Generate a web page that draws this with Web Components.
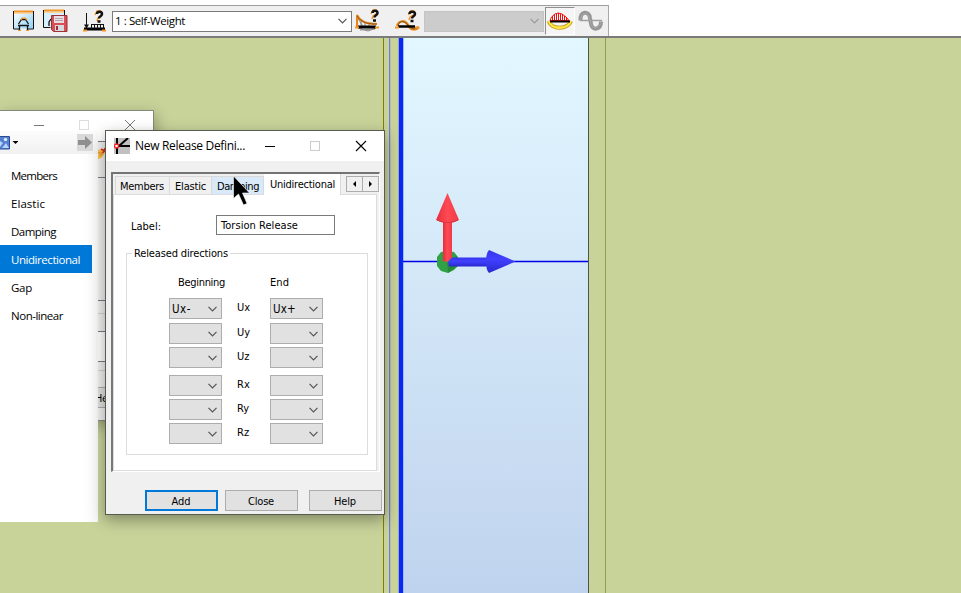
<!DOCTYPE html>
<html lang="en">
<head>
<meta charset="utf-8">
<title>Release definition</title>
<style>
  html, body {
    margin: 0;
    padding: 0;
    width: 961px;
    height: 593px;
    overflow: hidden;
  }
</style>
</head>
<body>
<cad-app></cad-app>
<script>
// Text run that spreads its letters to an exact width
class FitText extends HTMLElement {
  connectedCallback() {
    this.attachShadow({ mode: 'open' });
    this.shadowRoot.innerHTML = '<style>:host { display: inline-block; white-space: nowrap; }</style><slot></slot>';
    const target = Number(this.getAttribute('w'));
    const count = this.textContent.length;
    if (target && count > 1) {
      const natural = this.getBoundingClientRect().width;
      this.style.letterSpacing = (target - natural) / count + 'px';
    }
  }
}
customElements.define('fit-text', FitText);

const ICONS = {
  frame: `<svg width="22" height="22" viewBox="0 0 22 22">
    <defs><linearGradient id="g" x2="1" y2="1"><stop stop-color="#fff"/><stop offset="1" stop-color="#8fd0f5"/></linearGradient></defs>
    <rect x=".5" y="1.500" width="20" height="17" fill="url(#g)"/>
    <path d="M1 1.500h19" stroke="#f79422" stroke-width="2"/><path d="M1 3.500h19" stroke="#ffd59c"/>
    <path d="M.5 1v18h6.500M20.500 1v18h-6.500" stroke="#111" fill="none"/>
    <path d="M6.500 20v-5M14.500 20v-5M5 15.500h11" fill="none" stroke="#151515" stroke-width="1.300"/>
    <path d="M5.500 14l3-4.500h4l3 4.500" stroke="#151515" fill="none" stroke-width="1.300"/>
    <path d="M7.500 10l2-2h2.500l2 2M5 20.500h3M13 20.500h3" stroke="#f79422" fill="none" stroke-width="1.200"/></svg>`,
  save: `<svg width="26" height="24" viewBox="0 0 26 24">
    <rect x=".5" y="1" width="21" height="17" fill="#d8f0fc"/>
    <path d="M1 1.500h20" stroke="#f79422" stroke-width="2"/><path d="M1 3.500h20" stroke="#ffd59c"/>
    <path d="M.5 1v17.500h7M21.500 1v5" stroke="#111" fill="none"/>
    <path d="M6 17v-4l2-3" stroke="#111" stroke-width="1.300" fill="none"/>
    <path d="M8.500 6.500h15.500v16H10.500l-2-2z" fill="#d94d55" stroke="#9b3036"/>
    <path d="M11 7h10v7H11z" fill="#e8dfe4"/><path d="M12 9.500h8M12 11.500h8" stroke="#b7a6ae"/>
    <path d="M12 16h9v6h-9z" fill="#d4dce0"/><path d="M14 17v4" stroke="#a02d38" stroke-width="2"/></svg>`,
  load: `<svg width="24" height="23" viewBox="0 0 24 23">
    <path d="M3.500 3v14" stroke="#111"/><path d="M1 14.500h5l-2.500 4z" fill="#111"/>
    <path d="M1 19h21" stroke="#000" stroke-width="3"/>
    <path d="M8 14.500h13M8.500 14v5M11.500 14v5M14.500 14v5M17.500 14v5M20.500 14v5" stroke="#111" fill="none"/>
    <path d="M0 20.500h4M19 20.500h4" stroke="#f79422" stroke-width="2"/>
    <path d="M12 5l2-4h4M14 11l1-3 3-2" stroke="#f79422" stroke-width="1.500" fill="none"/>
    <path d="M14 4c0-3 5-3 5 0 0 2.500-3 2-3 4.500M14.500 11.500h3" stroke="#111" stroke-width="2.500" fill="none"/></svg>`,
  moment: `<svg width="26" height="24" viewBox="0 0 26 24">
    <path d="M3 19l10 3 8-3M5 21l15-1M2 8l7 11M6 12v6M10 14v4M14 15v3" stroke="#888" fill="none"/>
    <path d="M2 18V6c3 6 8 9 20 9" fill="none" stroke="#e4851c" stroke-width="2"/>
    <path d="M2 7c4 6 9 8 20 8" stroke="#6c4a20" stroke-width=".7" fill="none"/>
    <path d="M3 18h18" stroke="#000" stroke-width="3"/><path d="M0 18.500h4M20 18.500h4" stroke="#f79422" stroke-width="2"/>
    <path d="M16 5l2-4h4M17 10l1-3 3-2" stroke="#f79422" stroke-width="1.500" fill="none"/>
    <path d="M17.500 4c0-3 5-3 5 0 0 2.500-3 2-3 4.500M18 11.500h3" stroke="#111" stroke-width="2.500" fill="none"/></svg>`,
  mode: `<svg width="26" height="24" viewBox="0 0 26 24">
    <path d="M2 17c2-6 8-6 11-1s7 6 11 2" stroke="#e58a20" stroke-width="2.500" fill="none"/>
    <path d="M3 16c2-5 7-4 10 0s7 5 10 2" stroke="#664414" stroke-width=".8" fill="none"/>
    <path d="M3 17.500h17" stroke="#000" stroke-width="2.500"/><path d="M0 18.500h4M20 18.500h4" stroke="#f79422" stroke-width="2"/>
    <path d="M13.500 6l2-4h4M14 11l1-3 3-2" stroke="#f79422" stroke-width="1.500" fill="none"/>
    <path d="M14.500 5c0-3 5.500-3 5.500 0 0 2.500-3 2-3 4.500M15.500 12h3" stroke="#111" stroke-width="2.500" fill="none"/></svg>`,
  diagram: `<svg width="26" height="22" viewBox="0 0 26 22">
    <path d="M2 11c2 9 19 9 22 0" stroke="#c89c13" stroke-width="4" fill="none"/>
    <path d="M2 11c2 9 19 9 22 0" stroke="#ffe84a" stroke-width="2.300" fill="none"/>
    <path d="M3 10.500L4.500 7 8 4 11 3l4 1 4 3 3 3.500z" fill="#fff" stroke="#e11"/>
    <path d="M5.500 6v5M7.500 5v6M9.500 4v7M11.500 3v8M13.500 4v7M15.500 4v7M17.500 6v5M19.500 7v4" stroke="#e11"/>
    <path d="M3 11.500h20" stroke="#000" stroke-width="2"/></svg>`,
  wave: `<svg width="26" height="22" viewBox="0 0 26 22">
    <path d="M2.500 10.500C2 .5 11 .5 12 8l1 6c1 7 10 6 10-2.500" fill="none" stroke="#969696" stroke-width="4"/>
    <path d="M2.500 10C3 2 10 2 11.500 8l1.500 6c1 6 9 5 10-2" fill="none" stroke="#a9a9a9"/>
    <path d="M2 10.500h22" stroke="#a0a0a0" stroke-width="1.500"/></svg>`
};

class ToolIcon extends HTMLElement {
  connectedCallback() {
    this.attachShadow({ mode: 'open' });
    this.shadowRoot.innerHTML = `
      <style>
        :host { display: flex; flex: none; align-items: center; justify-content: center; }
        svg { display: block; }
      </style>
      ${ICONS[this.getAttribute('name')]}
    `;
  }
}
customElements.define('tool-icon', ToolIcon);

class ComboBox extends HTMLElement {
  connectedCallback() {
    this.attachShadow({ mode: 'open' });
    this.shadowRoot.innerHTML = `
      <style>
        :host {
          display: flex;
          flex: none;
          align-items: center;
          justify-content: space-between;
          box-sizing: border-box;
          width: 53px;
          height: 21px;
          padding: 0 4px 0 2px;
          border: 1px solid #adadad;
          background: #e1e1e1;
          color: #000;
          --arrow: #555;
        }
        :host([kind="edit"]) { width: 240px; background: #fff; border-color: #7a7a7a; padding-bottom: 1px; }
        :host([kind="disabled"]) { width: 120px; background: #ccc; border-color: #c4c4c4; --arrow: #9a9a9a; }
        svg { display: block; flex: none; }
      </style>
      <span><slot></slot></span>
      <svg width="9" height="6" viewBox="0 0 9 6"><path d="M.5 .8l4 4 4-4" fill="none" stroke="var(--arrow)" stroke-width="1.200"/></svg>
    `;
  }
}
customElements.define('combo-box', ComboBox);

class PushButton extends HTMLElement {
  connectedCallback() {
    this.attachShadow({ mode: 'open' });
    this.shadowRoot.innerHTML = `
      <style>
        :host {
          display: flex;
          align-items: center;
          justify-content: center;
          box-sizing: border-box;
          width: 73px;
          height: 21px;
          border: 1px solid #adadad;
          background: #e1e1e1;
          padding: 1px 1px 0 0;
        }
        :host([default]) { border: 2px solid #0078d7; }
      </style>
      <slot></slot>
    `;
  }
}
customElements.define('push-button', PushButton);

class MainToolbar extends HTMLElement {
  connectedCallback() {
    this.attachShadow({ mode: 'open' });
    this.shadowRoot.innerHTML = `
      <style>
        :host {
          display: block;
          box-sizing: border-box;
          height: 38px;
          padding-top: 5px;
          background: #fff;
          border-bottom: 2px solid #7b7b7b;
          font: 11.500px "Open Sans", "Noto Sans", sans-serif;
        }
        .bar {
          display: flex;
          align-items: center;
          box-sizing: border-box;
          width: 609px;
          height: 31px;
          padding-left: 13px;
          border-top: 1px solid #9d9d9d;
          border-right: 1px solid #a8a8a8;
          background: #f0f0f0;
        }
        .save { margin-left: 8px; }
        .load { margin-left: 14px; }
        .case { margin-left: 5px; }
        .moment { margin-left: 3px; }
        .mode { margin-left: 14px; }
        .modes { margin-left: 3px; }
        .pressed {
          box-sizing: border-box;
          width: 30px;
          height: 28px;
          margin-left: 1px;
          border: 1px solid #8f8f8f;
          border-right-color: #fff;
          border-bottom-color: #fff;
          background: #f5f5f5;
        }
        .wave { margin-left: 3px; }
      </style>
      <div class="bar">
        <tool-icon name="frame"></tool-icon>
        <tool-icon class="save" name="save"></tool-icon>
        <tool-icon class="load" name="load"></tool-icon>
        <combo-box class="case" kind="edit"><fit-text w="70">1 : Self-Weight</fit-text></combo-box>
        <tool-icon class="moment" name="moment"></tool-icon>
        <tool-icon class="mode" name="mode"></tool-icon>
        <combo-box class="modes" kind="disabled"></combo-box>
        <tool-icon class="pressed" name="diagram"></tool-icon>
        <tool-icon class="wave" name="wave"></tool-icon>
      </div>
    `;
  }
}
customElements.define('main-toolbar', MainToolbar);

// Model canvas: profile edges, lit web and the axis tripod
class ModelView extends HTMLElement {
  connectedCallback() {
    this.attachShadow({ mode: 'open' });
    this.shadowRoot.innerHTML = `
      <style>
        :host { display: block; height: 555px; background: #c8d39a; }
        svg { display: block; }
      </style>
      <svg width="961" height="555" viewBox="0 38 961 555">
        <defs>
          <linearGradient id="sky" x2="0" y2="1"><stop stop-color="#e2f7ff"/><stop offset="1" stop-color="#c0d3ee"/></linearGradient>
          <linearGradient id="red" x2="1"><stop stop-color="#e52e3b"/><stop offset=".5" stop-color="#ff4a55"/><stop offset="1" stop-color="#ed3a45"/></linearGradient>
          <linearGradient id="blue" x2="0" y2="1"><stop stop-color="#3535ee"/><stop offset=".4" stop-color="#4040ff"/><stop offset="1" stop-color="#2929cf"/></linearGradient>
        </defs>
        <rect x="403" y="38" width="185" height="555" fill="url(#sky)"/>
        <path d="M383.500 38v555" stroke="#808000"/>
        <path d="M389.500 38v555" stroke="#7777dc"/>
        <path d="M390.500 38v555" stroke="#b3bbb9"/>
        <path d="M398.500 38v555" stroke="#9aa4c4"/>
        <path d="M401 38v555" stroke="#0829f2" stroke-width="4"/>
        <path d="M403.500 38v555" stroke="#a5b8f7"/>
        <path d="M588.500 38v555" stroke="#4c5547"/>
        <path d="M605.500 38v555" stroke="#929e49"/>
        <path d="M403 261.500h185" stroke="#0000e6" stroke-width="1.500"/>
        <path d="M441 252l6-1 7 1 4 5v9l-4 4-6 3-7-2-4-5v-9z" fill="#32a047"/>
        <path d="M447 262l10-6v10l-9 7z" fill="#238b38"/>
        <path d="M443 222h9v36l-5 4-4-1z" fill="url(#red)"/>
        <path d="M447.500 193L459 220q-5 3-11 3.500-7-.5-12-3.500z" fill="url(#red)"/>
        <path d="M437 220q11 5 21 0" fill="none" stroke="#d93440"/>
        <path d="M448 262l4-4.500h35v9h-38z" fill="url(#blue)"/>
        <path d="M489 250l26.500 11.500L489 273q-3-3-3-11.500 0-9 3-11.500z" fill="url(#blue)"/>
      </svg>
    `;
  }
}
customElements.define('model-view', ModelView);

// Release list, partly hidden behind the definition dialog
class ReleaseList extends HTMLElement {
  connectedCallback() {
    this.attachShadow({ mode: 'open' });
    this.shadowRoot.innerHTML = `
      <style>
        :host {
          display: block;
          box-sizing: border-box;
          width: 154px;
          height: 311px;
          border: 1px solid #858878;
          border-left: 0;
          background: #f0f0f0;
          box-shadow: 2px 4px 14px rgba(0, 0, 0, .28);
          font: 11.500px "Open Sans", "Noto Sans", sans-serif;
        }
        .title { display: flex; justify-content: flex-end; height: 30px; background: #fff; }
        .title svg { display: block; }
        .back { display: flex; flex-direction: column; margin-left: 98px; }
        .back div { box-sizing: border-box; border-bottom: 1px solid #777b85; }
        .back .soft { border-color: #d2d2d2; }
        .back .help { border-color: #adadad; background: #e1e1e1; line-height: 20px; }
        .help span { display: block; margin-left: -4px; letter-spacing: -.5px; }
        .bee svg { display: block; }
        /* drop-down menu opened over the window */
        .menu {
          position: absolute;
          left: 0;
          top: 20px;
          width: 98px;
          height: 391px;
          background: linear-gradient(90deg, #fff 85%, #f7f7f7);
        }
        .tools {
          display: flex;
          align-items: center;
          justify-content: space-between;
          box-sizing: border-box;
          height: 23px;
          background: linear-gradient(#fcfcfc, #f1f1f1);
          padding-right: 5px;
        }
        .pic { display: flex; align-items: center; }
        .arrow { background: #d9d9d9; width: 16px; height: 17px; }
        ul { list-style: none; margin: 7px 0 0; padding: 0; }
        li { box-sizing: border-box; width: 92px; height: 28px; padding-left: 11px; line-height: 30px; }
        .on { background: #0078d7; color: #fff; }
      </style>
      <div class="title">
        <svg width="130" height="30" viewBox="23 111 130 30">
          <path d="M34 125.500h10" stroke="#777"/>
          <rect x="79.500" y="120.500" width="9" height="9" fill="none" stroke="#ddd"/>
          <path d="M125 120l10 10M135 120l-10 10" stroke="#777"/>
        </svg>
      </div>
      <div class="back">
        <div style="height:1px"></div>
        <div class="bee" style="height:36px"><svg width="10" height="20" viewBox="0 0 10 20"><path d="M0 8q5-2 7 1-1 7-7 8z" fill="#f8c34d"/><path d="M0 11h5M2 14l4-5" stroke="#e4862b"/><path d="M3 7l5 3M7 6l-2 5" stroke="#e22d18" stroke-width="1.500"/></svg></div>
        <div style="height:123px"></div>
        <div class="soft" style="height:13px"></div>
        <div style="height:18px"></div>
        <div style="height:30px;background:#fff"></div>
        <div class="soft" style="height:9px"></div>
        <div class="soft" style="height:17px;border-color:#adadad"></div>
        <div class="help" style="height:20px"><span>He</span></div>
      </div>
      <div class="menu">
        <div class="tools">
          <div class="pic">
            <svg width="18" height="15" viewBox="0 0 18 15">
              <path d="M0 1h9v13H0z" fill="#5580d0"/><path d="M0 1.500h9.500v12.500H0" stroke="#284c96" fill="none"/>
              <path d="M0 6l3 2-3 4zM2 13l4-5 3 5z" fill="#b7d3ff"/><circle cx="5.500" cy="4.500" r="1.700" fill="#dbebff"/>
              <path d="M12.500 6h6l-3 3z" fill="#000"/>
            </svg>
          </div>
          <svg class="arrow" viewBox="0 0 16 17"><path d="M1 6h7V2l7 6.500L8 15v-4H1z" fill="#8f8f8f"/></svg>
        </div>
        <ul>
          <li><fit-text w="46">Members</fit-text></li>
          <li><fit-text w="34">Elastic</fit-text></li>
          <li><fit-text w="45">Damping</fit-text></li>
          <li class="on"><fit-text w="69">Unidirectional</fit-text></li>
          <li><fit-text w="21">Gap</fit-text></li>
          <li><fit-text w="52">Non-linear</fit-text></li>
        </ul>
      </div>
    `;
  }
}
customElements.define('release-list', ReleaseList);

class ReleaseRow extends HTMLElement {
  connectedCallback() {
    const begin = this.getAttribute('begin') || '';
    const end = this.getAttribute('end') || '';
    this.attachShadow({ mode: 'open' });
    this.shadowRoot.innerHTML = `
      <style>
        :host { display: flex; height: 21px; }
        .dir { width: 33px; padding-left: 15px; line-height: 19px; }
        combo-box span { display: block; padding-top: 1px; font-size: 11.500px; }
      </style>
      <combo-box><span>${begin && `<fit-text w="19">${begin}</fit-text>`}</span></combo-box>
      <div class="dir"><slot></slot></div>
      <combo-box><span>${end && `<fit-text w="23">${end}</fit-text>`}</span></combo-box>
    `;
  }
}
customElements.define('release-row', ReleaseRow);

class ReleaseDialog extends HTMLElement {
  connectedCallback() {
    this.attachShadow({ mode: 'open' });
    this.shadowRoot.innerHTML = `
      <style>
        :host {
          display: flex;
          flex-direction: column;
          box-sizing: border-box;
          width: 280px;
          height: 385px;
          border: 1px solid #585b50;
          background: #f0f0f0;
          box-shadow: 0 5px 14px rgba(0, 0, 0, .36);
          font: 11px "DejaVu Sans Condensed", "DejaVu Sans", sans-serif;
        }
        .title {
          display: flex;
          align-items: center;
          box-sizing: border-box;
          height: 30px;
          padding: 0 0 1px 8px;
          background: #fff;
          font: 12px "Open Sans", "Noto Sans", sans-serif;
        }
        .title fit-text { margin-left: 5px; }
        .controls { margin-left: auto; margin-right: 15px; }
        .frame {
          display: flex;
          flex-direction: column;
          box-sizing: border-box;
          width: 269px;
          height: 300px;
          margin: 11px 0 0 5px;
          border: 2px solid #737373;
          border-left-color: #777;
          border-right: 1px solid #fff;
          border-bottom: 1px solid #fff;
          padding-right: 2px;
        }
        .tabs { display: flex; align-items: flex-end; height: 20px; padding-left: 2px; }
        .tab {
          flex: none;
          box-sizing: border-box;
          height: 18px;
          padding: 1px 0 0 5px;
          line-height: 17px;
          border: 1px solid #d9d9d9;
          border-width: 1px 1px 0 0;
        }
        .hot { background: #d8eaf9; }
        .on { height: 21px; background: #fff; margin-bottom: -1px; padding: 0 0 0 6px; line-height: 21px; border-top: 0; z-index: 1; }
        .spin { display: flex; flex: none; margin: 0 0 2px 5px; }
        .spin svg { display: block; box-sizing: border-box; width: 17px; height: 16px; border: 1px solid #adadad; background: #f0f0f0; }
        .spin svg + svg { margin-left: -1px; }
        .page {
          box-sizing: border-box;
          height: 277px;
          width: 264px;
          border: 1px solid #dcdcdc;
          background: #fff;
          padding: 20px 8px 0 12px;
        }
        .label { display: flex; align-items: center; height: 20px; padding-left: 5px; }
        .label > fit-text { padding-top: 2px; }
        .label .input {
          display: flex;
          align-items: center;
          box-sizing: border-box;
          width: 119px;
          height: 20px;
          margin-left: auto;
          margin-right: 33px;
          padding-left: 4px;
          border: 1px solid #7a7a7a;
        }
        fieldset {
          box-sizing: border-box;
          width: 242px;
          height: 209px;
          margin: 11px 0 0;
          padding: 16px 0 0 42px;
          border: 1px solid #dcdcdc;
          min-width: 0;
        }
        legend { height: 14px; line-height: 15px; margin-left: -37px; padding: 0 2px; }
        .heads { display: flex; height: 14px; line-height: 14px; margin-bottom: 8px; padding-left: 9px; }
        .heads .end { margin-left: 45px; }
        .rows { display: flex; flex-direction: column; }
        .actions { display: flex; justify-content: flex-end; padding: 18px 2px 0 0; }
        .actions push-button + push-button { margin-left: 7px; }
        .actions .help { margin-left: 11px !important; }
      </style>
      <div class="title">
        <svg width="16" height="16" viewBox="0 0 16 16">
          <rect width="16" height="16" fill="#c0c0c0"/>
          <path d="M3 0v16M3 8h13M5 8l9-8" stroke="#000" stroke-width="2" fill="none"/>
          <circle cx="2.500" cy="8" r="2" fill="#fff" stroke="#f11" stroke-width="1.300"/>
        </svg>
        <fit-text w="110">New Release Defini...</fit-text>
        <svg class="controls" width="106" height="20" viewBox="263 135 106 20">
          <path d="M265 145.500h10" stroke="#000"/>
          <rect x="310.500" y="140.500" width="9" height="9" fill="none" stroke="#ccc"/>
          <path d="M356 140l10 10M366 140l-10 10" stroke="#000" stroke-width="1.100"/>
        </svg>
      </div>
      <div class="frame">
        <div class="tabs">
          <div class="tab" style="width:55px;border-left-width:1px;padding-left:4px"><fit-text w="44">Members</fit-text></div>
          <div class="tab" style="width:42px"><fit-text w="31">Elastic</fit-text></div>
          <div class="tab hot" style="width:52px"><fit-text w="42">Damping</fit-text></div>
          <div class="tab on" style="width:77px"><fit-text w="65">Unidirectional</fit-text></div>
          <div class="spin">
            <svg viewBox="0 0 15 14"><path d="M9 4v6L6 7z"/></svg>
            <svg viewBox="0 0 15 14"><path d="M6 4v6l3-3z"/></svg>
          </div>
        </div>
        <div class="page">
          <div class="label">
            <fit-text w="30">Label:</fit-text>
            <div class="input"><fit-text w="77">Torsion Release</fit-text></div>
          </div>
          <fieldset>
            <legend><fit-text w="94">Released directions</fit-text></legend>
            <div class="heads">
              <fit-text w="47">Beginning</fit-text>
              <fit-text class="end" w="19">End</fit-text>
            </div>
            <div class="rows">
              <release-row begin="Ux-" end="Ux+">Ux</release-row>
              <release-row style="margin-top:4px">Uy</release-row>
              <release-row style="margin-top:3px">Uz</release-row>
              <release-row style="margin-top:7px">Rx</release-row>
              <release-row style="margin-top:3px">Ry</release-row>
              <release-row style="margin-top:3px">Rz</release-row>
            </div>
          </fieldset>
        </div>
      </div>
      <div class="actions">
        <push-button default><fit-text w="19">Add</fit-text></push-button>
        <push-button><fit-text w="26">Close</fit-text></push-button>
        <push-button class="help"><fit-text w="22">Help</fit-text></push-button>
      </div>
    `;
  }
}
customElements.define('release-dialog', ReleaseDialog);

class CadApp extends HTMLElement {
  connectedCallback() {
    this.attachShadow({ mode: 'open' });
    this.shadowRoot.innerHTML = `
      <style>
        :host { display: block; width: 961px; height: 593px; overflow: hidden; position: relative; }
        release-list { position: absolute; left: 0; top: 110px; }
        release-dialog { position: absolute; left: 105px; top: 130px; }
        .cursor { position: absolute; left: 233px; top: 175px; }
      </style>
      <main-toolbar></main-toolbar>
      <model-view></model-view>
      <release-list></release-list>
      <release-dialog></release-dialog>
      <svg class="cursor" width="20" height="32" viewBox="0 0 20 32">
        <path d="M.5 1v22.500l5-4.500 5 11 3.500-1.500-4.500-10.500h7z" fill="#000" stroke="#fff" stroke-width=".6"/>
      </svg>
    `;
  }
}
customElements.define('cad-app', CadApp);
</script>
</body>
</html>
